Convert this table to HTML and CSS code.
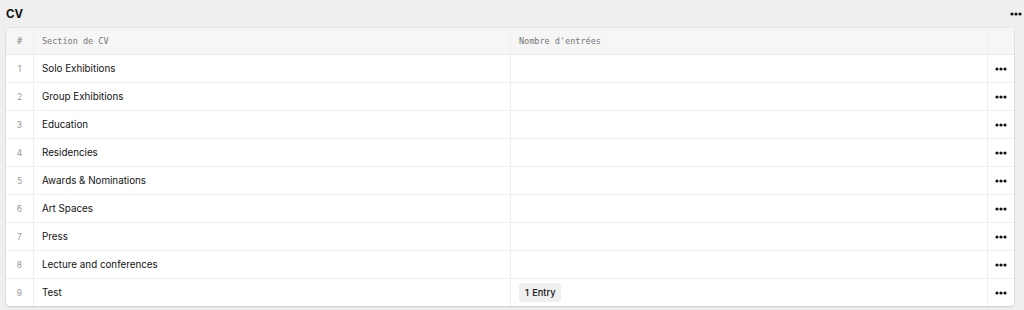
FILE: index.html
```html
<!DOCTYPE html>
<html lang="fr">
<head>
    <meta charset="UTF-8">
    <title>CV</title>
    <link rel="stylesheet" href="styles.css">
</head>
<body>

<div class="panel">
    <div class="panel-head">
        <h2 class="panel-title">CV</h2>
        <button class="dots" aria-label="Options"><svg width="12" height="4" viewBox="0 0 12 4"><circle cx="2" cy="2" r="1.6"/><circle cx="6" cy="2" r="1.6"/><circle cx="10" cy="2" r="1.6"/></svg></button>
    </div>

    <table class="cv-table">
        <thead>
            <tr>
                <th class="col-num">#</th>
                <th class="col-name">Section de CV</th>
                <th class="col-count">Nombre d'entrées</th>
                <th class="col-actions"></th>
            </tr>
        </thead>
        <tbody id="rows"></tbody>
    </table>
</div>

<script>
    const sections = [
        ['Solo Exhibitions', 0],
        ['Group Exhibitions', 0],
        ['Education', 0],
        ['Residencies', 0],
        ['Awards & Nominations', 0],
        ['Art Spaces', 0],
        ['Press', 0],
        ['Lecture and conferences', 0],
        ['Test', 1]
    ];

    const dotsIcon = '<svg width="12" height="4" viewBox="0 0 12 4"><circle cx="2" cy="2" r="1.6"/><circle cx="6" cy="2" r="1.6"/><circle cx="10" cy="2" r="1.6"/></svg>';
    const tbody = document.getElementById('rows');

    // One row per CV section, with a count badge when it has entries
    sections.forEach(function(section, i) {
        const row = document.createElement('tr');
        const count = section[1] ? '<span class="badge">' + section[1] + ' Entry</span>' : '';
        row.innerHTML = `
            <td class="col-num">${i + 1}</td>
            <td></td>
            <td>${count}</td>
            <td class="col-actions"><button class="dots">${dotsIcon}</button></td>
        `;
        row.children[1].textContent = section[0];
        tbody.appendChild(row);
    });
</script>

</body>
</html>
```

FILE: styles.css
```css
html, body {
    margin: 0;
    height: 100%;
    overflow: hidden;
}

body {
    background-color: #efefef;
    font-family: Inter, "Liberation Sans", sans-serif;
    color: #111;
}

.panel {
    padding: 0 10px 0 6px;
}

.panel-head {
    display: flex;
    align-items: center;
    justify-content: space-between;
    height: 28px;
    padding-bottom: 1px;
    box-sizing: border-box;
}

.panel-title {
    margin: 0;
    font-size: 11.5px;
    font-weight: 700;
}

.dots {
    display: flex;
    border: none;
    background: transparent;
    padding: 0;
    fill: #111;
    cursor: pointer;
}

.panel-head .dots {
    margin-right: -8px;
}

.cv-table {
    width: 100%;
    border-collapse: separate;
    border-spacing: 0;
    background-color: #fff;
    border-radius: 4px;
    box-shadow: 0 1px 2px rgba(0, 0, 0, 0.12), 0 0 0 1px rgba(0, 0, 0, 0.03);
    font-size: 9.8px;
    table-layout: fixed;
}

.cv-table th {
    height: 26px;
    background-color: #f6f6f6;
    font-family: "DejaVu Sans Mono", "Liberation Mono", monospace;
    font-weight: 400;
    font-size: 8.5px;
    color: #777;
    text-align: left;
    padding: 0 8px;
    border-bottom: 1px solid #ebebeb;
}

.cv-table th:first-child {
    border-top-left-radius: 4px;
}

.cv-table th:last-child {
    border-top-right-radius: 4px;
}

.cv-table td {
    height: 27px;
    padding: 0 8px;
    border-bottom: 1px solid #eeeeee;
}

.cv-table tr:last-child td {
    border-bottom: none;
}

.cv-table th + th,
.cv-table td + td {
    border-left: 1px solid #eeeeee;
}

.col-num {
    width: 11px;
    text-align: center !important;
    color: #999;
    font-size: 8.5px;
}

.cv-table th.col-num {
    color: #888;
}

.col-actions {
    width: 10px;
}

.col-actions .dots {
    margin-left: -1px;
}

.badge {
    display: inline-block;
    background-color: #efefef;
    border-radius: 4px;
    padding: 4px 6px;
    font-size: 9.2px;
    font-weight: 500;
    word-spacing: 1px;
}
```
